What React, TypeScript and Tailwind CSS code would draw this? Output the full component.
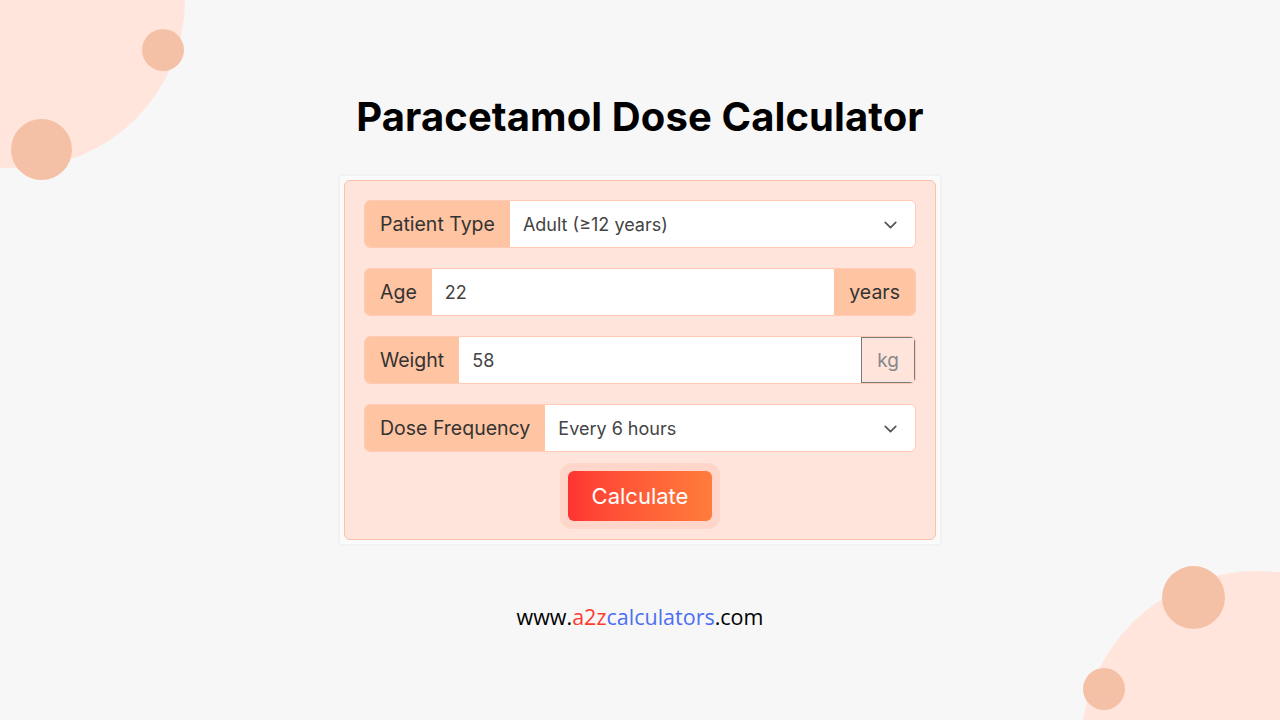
import React from "react";

function Chevron() {
  return (
    <svg width="21" height="21" viewBox="0 0 24 24" fill="none" stroke="#555" strokeWidth="2" strokeLinecap="round" strokeLinejoin="round">
      <path d="M6 9.5l6 6 6-6" />
    </svg>
  );
}

export default function App() {
  return (
    <div className="relative w-[1280px] h-[720px] overflow-hidden bg-[#f7f7f7]" style={{ fontFamily: "Inter, 'Noto Sans', sans-serif" }}>
      {/* decorations */}
      <div className="absolute left-[-185px] top-[-168px] w-[370px] h-[336px] rounded-full bg-[#ffe5dc]" />
      <div className="absolute left-[142px] top-[29px] w-[42px] h-[42px] rounded-full bg-[#f5c1a6]" />
      <div className="absolute left-[11px] top-[119px] w-[61px] h-[61px] rounded-full bg-[#f5c1a6]" />
      <div className="absolute left-[1081px] top-[571px] w-[352px] h-[352px] rounded-full bg-[#ffe5dc]" />
      <div className="absolute left-[1162px] top-[566px] w-[63px] h-[63px] rounded-full bg-[#f5c1a6]" />
      <div className="absolute left-[1083px] top-[668px] w-[42px] h-[42px] rounded-full bg-[#f5c1a6]" />

      <div className="relative flex flex-col items-center">
        <h1 className="mt-[93px] h-[48px] leading-[48px] text-[40px] font-bold text-black tracking-[0.1px]">
          Paracetamol Dose Calculator
        </h1>

        <div className="mt-[35px] p-[4px] bg-[#fbfbfb] shadow-[0_0_3px_rgba(0,0,0,0.08)]">
          <div className="w-[592px] h-[360px] rounded-[6px] border border-[#f8c2aa] bg-[#ffe4dc] px-[19px] pt-[19px] flex flex-col">
            <div className="flex flex-col gap-[20px]">
              {/* Patient type */}
              <div className="flex h-[48px] rounded-[6px] border border-[#ffcab5] overflow-hidden">
                <div className="flex items-center px-[15px] pt-[2px] bg-[#ffc4a1] text-[19.5px] text-[#333]">Patient Type</div>
                <div className="flex-1 flex items-center justify-between bg-white pl-[13px] pr-[14px] text-[18px] text-[#444]">
                  <span>Adult (≥12 years)</span>
                  <Chevron />
                </div>
              </div>
              {/* Age */}
              <div className="flex h-[48px] rounded-[6px] border border-[#ffcab5] overflow-hidden">
                <div className="flex items-center px-[15px] pt-[2px] bg-[#ffc4a1] text-[19.5px] text-[#333]">Age</div>
                <div className="flex-1 flex items-center bg-white pl-[13px] text-[18px] text-[#444]">22</div>
                <div className="flex items-center px-[15px] pt-[2px] bg-[#ffc4a1] text-[19.5px] text-[#333]">years</div>
              </div>
              {/* Weight */}
              <div className="flex h-[48px] rounded-[6px] border border-[#ffcab5] overflow-hidden">
                <div className="flex items-center px-[15px] pt-[2px] bg-[#ffc4a1] text-[19.5px] text-[#333]">Weight</div>
                <div className="flex-1 flex items-center bg-white pl-[13px] text-[18px] text-[#444]">58</div>
                <div className="w-[54px] flex items-center justify-center pt-[2px] bg-[#ffe4dc] border border-[#7a7a7a] text-[19px] text-[#888]">kg</div>
              </div>
              {/* Dose frequency */}
              <div className="flex h-[48px] rounded-[6px] border border-[#ffcab5] overflow-hidden">
                <div className="flex items-center px-[15px] pt-[2px] bg-[#ffc4a1] text-[19.5px] text-[#333]">Dose Frequency</div>
                <div className="flex-1 flex items-center justify-between bg-white pl-[13px] pr-[14px] text-[18px] text-[#444]">
                  <span>Every 6 hours</span>
                  <Chevron />
                </div>
              </div>
            </div>
            <div className="mt-[11px] self-center p-[8px] rounded-[12px] bg-[#ffd6c9]">
              <div className="w-[144px] h-[50px] rounded-[6px] flex items-center justify-center text-white text-[22px] bg-gradient-to-r from-[#ff3333] to-[#ff7c3c]">
                Calculate
              </div>
            </div>
          </div>
        </div>

        <div className="mt-[59px] h-[28px] leading-[28px] text-[21.5px] text-black" style={{ fontFamily: "'Open Sans', sans-serif" }}>
          www.<span className="text-[#ff3b30]">a2z</span><span className="text-[#4c6ef5]">calculators</span>.com
        </div>
      </div>
    </div>
  );
}
